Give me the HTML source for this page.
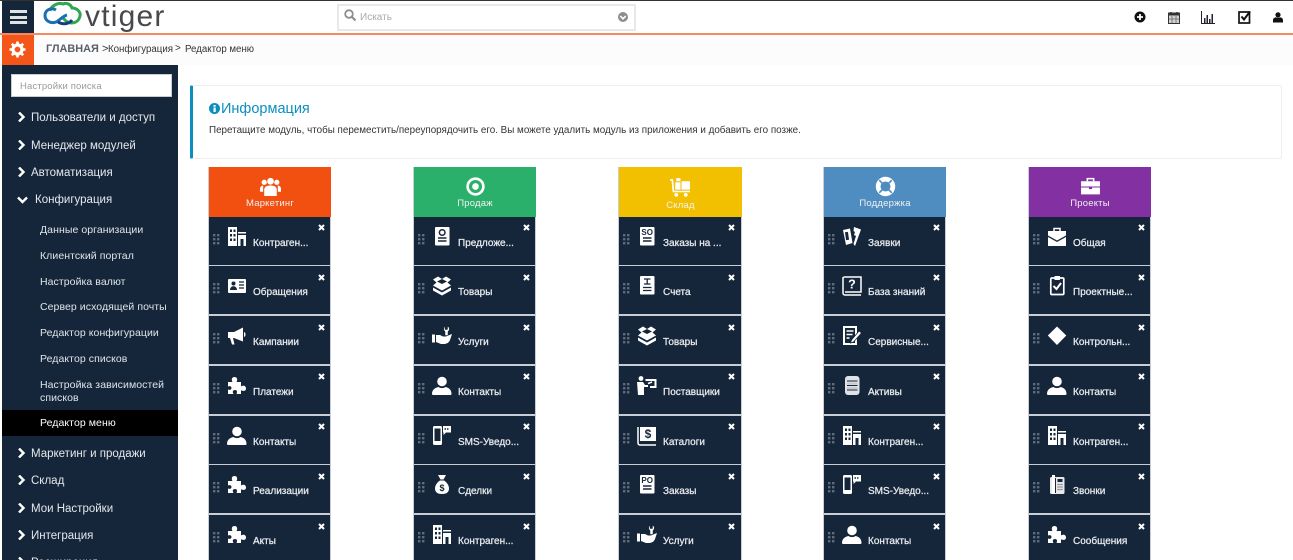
<!DOCTYPE html>
<html><head><meta charset="utf-8"><title>vtiger</title>
<style>
*{box-sizing:border-box}
html,body{margin:0;padding:0;width:1293px;height:560px;overflow:hidden;background:#fff;font-family:"Liberation Sans","DejaVu Sans",sans-serif}
#w{position:relative;width:1293px;height:560px;overflow:hidden;background:#fff}
.a{position:absolute}
.s{position:absolute;left:31px;font-size:11.5px;color:#e4e8ec;white-space:nowrap;line-height:14px}
.c{position:absolute;left:40px;font-size:10.5px;color:#dfe4e9;white-space:nowrap;line-height:13px;letter-spacing:.07px}
.ch{position:absolute;left:17px;width:9px;height:10px}
.col{position:absolute;top:167px;width:122px;height:393px;background:#c9ced6;box-shadow:-1px 0 0 #c9ced6;overflow:hidden}
.h{height:49.5px;text-align:center;color:#f2f2f2;font-size:9.5px;position:relative;letter-spacing:.2px}
.h svg{position:absolute;left:50.5px;top:9px;width:21px;height:21px}
.h span{position:absolute;left:0;right:0;top:30px;line-height:13px}
.i{position:relative;height:48px;margin:0 1px 1.75px 0;background:#16263a;color:#e8ebef;font-size:10px;-webkit-text-stroke:.25px #e8ebef;letter-spacing:0}
.i .g{position:absolute;left:4px;top:17px;width:7px;height:11px}
.i .k{position:absolute;left:18px;top:10px;width:20px;height:20px}
.i b{position:absolute;left:44px;top:20px;line-height:13px;white-space:nowrap;font-weight:normal}
.i .x{position:absolute;left:109px;top:7.5px;width:7px;height:7px}
</style></head>
<body>
<div id="w">
<svg width="0" height="0" style="position:absolute">
<defs>
<symbol id="grip" viewBox="0 0 7 11"><g fill="#5f6b7a"><rect x="0" y="0" width="2.4" height="2.4"/><rect x="4" y="0" width="2.4" height="2.4"/><rect x="0" y="4" width="2.4" height="2.4"/><rect x="4" y="4" width="2.4" height="2.4"/><rect x="0" y="8" width="2.4" height="2.4"/><rect x="4" y="8" width="2.4" height="2.4"/></g></symbol>
<symbol id="x" viewBox="0 0 7 7"><path d="M1 1l5 5M6 1L1 6" stroke="#fff" stroke-width="2" fill="none"/></symbol>
<symbol id="bld" viewBox="0 0 20 20"><path fill="#fff" fill-rule="evenodd" d="M1 0h9v19H1z M3 2.500v2.500h2V2.500z M6.500 2.500v2.500h2V2.500z M3 7v2.500h2V7z M6.500 7v2.500h2V7z M3 11.500v2.500h2v-2.500z M6.500 11.500v2.500h2v-2.500z M11 5h8v1.500h-8z M11 8h8v11h-2.500v-7h-3v7H11z"/></symbol>
<symbol id="card" viewBox="0 0 20 20"><rect x="1" y="3" width="18" height="14" rx="1" fill="#fff"/><circle cx="6.500" cy="7.500" r="2" fill="#16263a"/><path d="M3 14c0-5 7-5 7 0z" fill="#16263a"/><path d="M12 6h5M12 9h5M12 12h5" stroke="#16263a" stroke-width="1.300"/></symbol>
<symbol id="mega" viewBox="0 0 20 20"><path fill="#fff" d="M1 6h6l9-4.500v14L7 12H6l1.500 6.500H5L3 12H1z"/><path fill="#fff" d="M17 6c2 .5 2 4.500 0 5z"/></symbol>
<symbol id="puz" viewBox="0 0 20 20"><path fill="#fff" d="M1 6h4.500C4 3.500 5 1 7.500 1s3.500 2.500 2 5H14v4.500c2.500-1.500 5-.5 5 2s-2.500 3-5 1.800V18H9.500c1-2.500.5-4-1.500-4s-3 1.500-1.500 4H1v-4.500c2 1 3.500 0 3.500-1.500S3 9.500 1 10.500z"/></symbol>
<symbol id="usr" viewBox="0 0 20 20"><circle cx="10" cy="5.500" r="4.800" fill="#fff"/><path fill="#fff" d="M0 18c0-5 4-6.500 6.500-7 2 1.500 5 1.500 7 0 2.500.5 6 2 6 7 0 .5-.5 1-1 1H1c-.5 0-1-.5-1-1z"/></symbol>
<symbol id="quo" viewBox="0 0 20 20"><rect x="3" y="0" width="14.500" height="18.500" rx="1" fill="#fff"/><circle cx="10.200" cy="5.500" r="2.800" fill="none" stroke="#16263a" stroke-width="1.500"/><path d="M6 11h8.500M6 14h8.500" stroke="#16263a" stroke-width="1.400"/></symbol>
<symbol id="box" viewBox="0 0 20 20"><path fill="#fff" d="M1 3.500L6 .5l4 2.500 4-2.500 5 3-3.500 3 3.500 3-9 5-9-5 3.500-3z"/><path fill="#16263a" d="M5 5.500L10 3l5 2.500L10 8z"/><path fill="#fff" d="M1 11.500l9 5 9-5v3l-9 5-9-5z"/></symbol>
<symbol id="svc" viewBox="0 0 20 20"><rect x="0" y="8.500" width="3" height="8" fill="#fff"/><path fill="#fff" d="M4 9h4l3 1.500h3l1-.5 5-2-2 6c-1 3-4 4-6 4H9l-5-2z"/><path fill="#fff" d="M13 .5v3h2.500v-3c2 .5 2.500 3 1 4.500l-.5.500v4h-3v-4c-1.500-1-2-4 0-5z" stroke="#16263a" stroke-width=".5"/></symbol>
<symbol id="sms" viewBox="0 0 20 20"><rect x="1" y="0" width="9" height="19" rx="1.500" fill="#fff"/><rect x="2.500" y="2.500" width="6" height="12.500" fill="#16263a"/><path fill="#fff" d="M11 0h8v6.500h-5L11.500 9V6.500H11z"/><path d="M12.500 3h1.500M15 3h1.500" stroke="#16263a" stroke-width="1.500"/></symbol>
<symbol id="bag" viewBox="0 0 20 20"><path fill="#fff" d="M6 0h8l-2.500 4.500h-3z"/><path fill="#fff" d="M8 5.500h4c3 2 5 5 5 8 0 4-3 5.500-7 5.500s-7-1.500-7-5.500c0-3 2-6 5-8z"/><text x="10" y="16" font-size="9" font-weight="bold" text-anchor="middle" fill="#16263a" font-family="Liberation Sans">$</text></symbol>
<symbol id="so" viewBox="0 0 20 20"><rect x="3" y="0" width="14.500" height="18.500" rx="1" fill="#fff"/><text x="10.200" y="8" font-size="8" font-weight="bold" text-anchor="middle" fill="#16263a" font-family="Liberation Sans">SO</text><path d="M6 11h8.500M6 14h8.500" stroke="#16263a" stroke-width="1.400"/></symbol>
<symbol id="po" viewBox="0 0 20 20"><rect x="3" y="0" width="14.500" height="18.500" rx="1" fill="#fff"/><text x="10.200" y="8" font-size="8" font-weight="bold" text-anchor="middle" fill="#16263a" font-family="Liberation Sans">PO</text><path d="M6 11h8.500M6 14h8.500" stroke="#16263a" stroke-width="1.400"/></symbol>
<symbol id="inv" viewBox="0 0 20 20"><rect x="3" y="0" width="14.500" height="18.500" rx="1" fill="#fff"/><path d="M7 3h6.500M10.200 3v5M7 8h6.500M6 11.500h8.500M6 14.500h8.500" stroke="#16263a" stroke-width="1.300"/></symbol>
<symbol id="vnd" viewBox="0 0 20 20"><circle cx="4" cy="2.500" r="2.400" fill="#fff"/><path fill="#fff" d="M0 6h6l2 3h3v2H7v8H1z"/><path d="M8.500 4h10v7H13" fill="none" stroke="#fff" stroke-width="2"/><path d="M11 7.500l4-1.500" stroke="#fff" stroke-width="1.500"/></symbol>
<symbol id="cat" viewBox="0 0 20 20"><path d="M1 1v16c0 1 .7 2 2 2h16" fill="none" stroke="#fff" stroke-width="1.500"/><path fill="#fff" d="M3 1h16v14H3z"/><text x="11" y="12" font-size="12" font-weight="bold" text-anchor="middle" fill="#16263a" font-family="Liberation Sans">$</text></symbol>
<symbol id="kb" viewBox="0 0 20 20"><path d="M1 1v16c0 1 .7 2 2 2h16" fill="none" stroke="#fff" stroke-width="1.500"/><path fill="none" stroke="#fff" stroke-width="1.500" d="M1.500 1h17.500v15H3"/><text x="10" y="12.500" font-size="12.500" font-weight="bold" text-anchor="middle" fill="#fff" font-family="Liberation Sans">?</text></symbol>
<symbol id="tik" viewBox="0 0 20 20"><path fill="#fff" d="M1 3l7-1.500L10.500 16l-6.500 2z"/><rect x="3.500" y="5" width="3" height="8" fill="#16263a" transform="rotate(-8 5 9)"/><path fill="#fff" d="M12 0l7 2.500-6 16.500-1.500-2L14 9l-2-1 1-3-1.500-1z"/></symbol>
<symbol id="srv" viewBox="0 0 20 20"><path fill="none" stroke="#fff" stroke-width="2" d="M2 1h12v17H2z"/><path d="M4.500 5h7M4.500 8.500h6M4.500 12h3" stroke="#fff" stroke-width="1.500"/><path fill="#fff" d="M17 5l2.500 2-8 9-3 1 1-3z" stroke="#16263a" stroke-width=".8"/></symbol>
<symbol id="ast" viewBox="0 0 20 20"><rect x="3" y="0" width="14.500" height="19" rx="3" fill="#dfe2e6"/><path d="M5 5h10.500M5 9.500h10.500M5 14h10.500" stroke="#16263a" stroke-width="1"/><path d="M5 6.500h10.500v2H5zM5 11h10.500v2H5z" fill="#c7ccd2"/></symbol>
<symbol id="brf" viewBox="0 0 20 20"><path d="M7 4V1.500h6V4" fill="none" stroke="#fff" stroke-width="1.500"/><path fill="#fff" d="M1 4h18v4.500l-9 5-9-5zM1 10l9 5 9-5v9H1z"/></symbol>
<symbol id="clp" viewBox="0 0 20 20"><rect x="3.800" y="2" width="13" height="16.500" rx="1" fill="none" stroke="#fff" stroke-width="1.700"/><rect x="7.500" y="0" width="5.500" height="4" fill="#fff"/><path d="M6.500 10l3 3 4.500-6" fill="none" stroke="#fff" stroke-width="2"/></symbol>
<symbol id="dia" viewBox="0 0 20 20"><path fill="#fff" d="M10 .5l9.300 9-9.300 9.500L.8 9.500z"/></symbol>
<symbol id="phn" viewBox="0 0 20 20"><rect x="3" y="2" width="14.500" height="17" rx="1.500" fill="#e8e8e8"/><rect x="5" y="0" width="3" height="19" fill="#fff"/><rect x="8" y="3" width="1" height="15" fill="#16263a"/><rect x="10.500" y="4" width="5" height="3" fill="#16263a"/><path d="M10.500 9.500h5M10.500 12h5M10.500 14.500h5" stroke="#5f6b7a" stroke-width="1.200" stroke-dasharray="1.200 .7"/></symbol>
</defs>
</svg>

<!-- top bar -->
<div class="a" style="left:0;top:0;width:1293px;height:1px;background:#333"></div>
<div class="a" style="left:0;top:33px;width:1293px;height:2px;background:#f58a62"></div>
<div class="a" style="left:2px;top:1px;width:32px;height:32px;background:#16263a"></div>
<div class="a" style="left:10px;top:10px;width:17px;height:3px;background:#dfe3e6"></div>
<div class="a" style="left:10px;top:15.500px;width:17px;height:3px;background:#dfe3e6"></div>
<div class="a" style="left:10px;top:21px;width:17px;height:3px;background:#dfe3e6"></div>

<!-- logo -->
<svg class="a" style="left:43px;top:2px" width="40" height="24" viewBox="0 0 40 24">
<path d="M7 9C8 4 15 0 20 2 24 0 28 3 29 6 34 6 38 10 37 14 36 19 32 21 28 21 24 21 22 18 19 15" fill="none" stroke="#2fa64f" stroke-width="3"/>
<path d="M13 8C8 5 2 8 2 13.500 2 19 8 22 13 20 17 18 20 14 24 13" fill="none" stroke="#1c6fb3" stroke-width="3"/>
<path d="M15 20C20 23 26 22 29 18" fill="none" stroke="#123f80" stroke-width="3"/>
</svg>
<div class="a" style="left:85px;top:-1px;font-size:30px;line-height:36px;color:#47494c;letter-spacing:1.200px;white-space:nowrap">vtiger</div>

<!-- search -->
<div class="a" style="left:337px;top:4px;width:299px;height:27px;border:2px solid #e8e8e8;background:#fff"></div>
<svg class="a" style="left:344px;top:9px" width="13" height="13" viewBox="0 0 13 13"><circle cx="5" cy="5" r="3.800" fill="none" stroke="#8a8f94" stroke-width="1.800"/><path d="M8 8l3.500 3.500" stroke="#8a8f94" stroke-width="2.200"/></svg>
<div class="a" style="left:360px;top:11px;font-size:10px;line-height:13px;color:#aaa">Искать</div>
<svg class="a" style="left:617px;top:11px" width="12" height="12" viewBox="0 0 12 12"><circle cx="6" cy="6" r="5" fill="#8a8f94"/><path d="M3.300 5L6 7.800 8.700 5" fill="none" stroke="#fff" stroke-width="1.600"/></svg>

<!-- top right icons -->
<svg class="a" style="left:1134px;top:11px" width="12" height="12" viewBox="0 0 12 12"><circle cx="6" cy="6" r="5.500" fill="#111"/><path d="M6 3v6M3 6h6" stroke="#fff" stroke-width="1.800"/></svg>
<svg class="a" style="left:1168px;top:11px" width="12" height="13" viewBox="0 0 12 13"><rect x=".5" y="2" width="11" height="10.500" fill="#d0d3d5" stroke="#333"/><rect x=".5" y="2" width="11" height="2.500" fill="#333"/><path d="M3 1v2M9 1v2" stroke="#333" stroke-width="1.500"/><path d="M4 5v7M8 5v7M1 8h10" stroke="#666" stroke-width=".8"/></svg>
<svg class="a" style="left:1201px;top:11px" width="14" height="13" viewBox="0 0 14 13"><path d="M.5 0v12.500H14" fill="none" stroke="#223" stroke-width="1"/><path d="M3 7h1.500v5H3zM5.500 4h1.500v8H5.500zM8 8h1.500v4H8zM10.500 3H12v9h-1.500z" fill="#223"/></svg>
<svg class="a" style="left:1238px;top:10px" width="13" height="14" viewBox="0 0 13 14"><rect x="1" y="2" width="10.500" height="11" fill="none" stroke="#111" stroke-width="1.700"/><path d="M3.500 6.500l2.500 3L12 1.500" fill="none" stroke="#111" stroke-width="2"/></svg>
<svg class="a" style="left:1273px;top:12px" width="10" height="11" viewBox="0 0 10 11"><circle cx="5" cy="2.800" r="2.600" fill="#111"/><path d="M0 10.500V8c0-2 2-2.500 3-2.800 1 .6 3 .6 4 0C8 5.500 10 6 10 8v2.500z" fill="#111"/></svg>

<!-- breadcrumb -->
<div class="a" style="left:0;top:35px;width:1293px;height:30px;background:#fcfcfc"></div>
<div class="a" style="left:2px;top:35px;width:32px;height:30px;background:#f4561a"></div>
<svg class="a" style="left:9px;top:41px" width="17" height="17" viewBox="0 0 17 17"><circle cx="8.500" cy="8.500" r="4.500" fill="none" stroke="#fff" stroke-width="3.200"/><path d="M8.500 .5v3M8.500 13.500v3M.5 8.500h3M13.500 8.500h3M2.800 2.800l2.200 2.200M12 12l2.200 2.200M14.200 2.800L12 5M5 12l-2.200 2.200" stroke="#fff" stroke-width="2.600"/></svg>
<div class="a" style="left:46px;top:42px;font-size:10.900px;line-height:15px;font-weight:bold;color:#5a6068;white-space:nowrap">ГЛАВНАЯ</div>
<div class="a" style="left:102px;top:42px;font-size:11px;line-height:15px;color:#333">&gt;</div>
<div class="a" style="left:108px;top:43px;font-size:9.700px;line-height:14px;color:#333;white-space:nowrap">Конфигурация</div>
<div class="a" style="left:175px;top:42px;font-size:10px;line-height:14px;color:#333">&gt;</div>
<div class="a" style="left:185px;top:43px;font-size:9.700px;line-height:14px;color:#333;white-space:nowrap">Редактор меню</div>

<!-- sidebar -->
<div class="a" style="left:2px;top:65px;width:176px;height:495px;background:#16263a"></div>
<div class="a" style="left:11px;top:74px;width:161px;height:23px;background:#fff;border:1px solid #c8ccd0"></div>
<div class="a" style="left:20px;top:81px;font-size:9.500px;line-height:12px;color:#9a9a9a;letter-spacing:.15px">Настройки поиска</div>

<svg class="ch" style="top:112px" viewBox="0 0 9 10"><path d="M2 .5L6.500 5 2 9.500" fill="none" stroke="#fff" stroke-width="2.400"/></svg>
<div class="s" style="top:111px">Пользователи и доступ</div>
<svg class="ch" style="top:140px" viewBox="0 0 9 10"><path d="M2 .5L6.500 5 2 9.500" fill="none" stroke="#fff" stroke-width="2.400"/></svg>
<div class="s" style="top:139px">Менеджер модулей</div>
<svg class="ch" style="top:167px" viewBox="0 0 9 10"><path d="M2 .5L6.500 5 2 9.500" fill="none" stroke="#fff" stroke-width="2.400"/></svg>
<div class="s" style="top:166px">Автоматизация</div>
<svg class="ch" style="top:195px;width:11px" viewBox="0 0 11 10"><path d="M1 2.500L5.500 7 10 2.500" fill="none" stroke="#fff" stroke-width="2.400"/></svg>
<div class="s" style="top:193px;left:35px">Конфигурация</div>
<div class="c" style="top:224px">Данные организации</div>
<div class="c" style="top:250px">Клиентский портал</div>
<div class="c" style="top:276px">Настройка валют</div>
<div class="c" style="top:301px">Сервер исходящей почты</div>
<div class="c" style="top:327px">Редактор конфигурации</div>
<div class="c" style="top:353px">Редактор списков</div>
<div class="c" style="top:379px">Настройка зависимостей</div>
<div class="c" style="top:392px">списков</div>
<div class="a" style="left:2px;top:410px;width:176px;height:26px;background:#000"></div>
<div class="c" style="top:417px;color:#fff">Редактор меню</div>
<svg class="ch" style="top:448px" viewBox="0 0 9 10"><path d="M2 .5L6.500 5 2 9.500" fill="none" stroke="#fff" stroke-width="2.400"/></svg>
<div class="s" style="top:447px">Маркетинг и продажи</div>
<svg class="ch" style="top:475px" viewBox="0 0 9 10"><path d="M2 .5L6.500 5 2 9.500" fill="none" stroke="#fff" stroke-width="2.400"/></svg>
<div class="s" style="top:474px">Склад</div>
<svg class="ch" style="top:503px" viewBox="0 0 9 10"><path d="M2 .5L6.500 5 2 9.500" fill="none" stroke="#fff" stroke-width="2.400"/></svg>
<div class="s" style="top:502px">Мои Настройки</div>
<svg class="ch" style="top:530px" viewBox="0 0 9 10"><path d="M2 .5L6.500 5 2 9.500" fill="none" stroke="#fff" stroke-width="2.400"/></svg>
<div class="s" style="top:529px">Интеграция</div>
<svg class="ch" style="top:557px" viewBox="0 0 9 10"><path d="M2 .5L6.500 5 2 9.500" fill="none" stroke="#fff" stroke-width="2.400"/></svg>
<div class="s" style="top:556px">Расширения</div>

<!-- info -->
<div class="a" style="left:190px;top:85px;width:1092px;height:74px;background:#fff;border:1px solid #eee;border-left:3px solid #0b8fbe;border-radius:2px"></div>
<svg class="a" style="left:209px;top:103px" width="11" height="11" viewBox="0 0 11 11"><circle cx="5.500" cy="5.500" r="5.500" fill="#0b8fbe"/><rect x="4.500" y="4.500" width="2.200" height="4.500" fill="#fff"/><rect x="4.500" y="2" width="2.200" height="1.700" fill="#fff"/></svg>
<div class="a" style="left:221px;top:100px;font-size:14.500px;line-height:18px;color:#0b8fbe;white-space:nowrap">Информация</div>
<div class="a" style="left:209px;top:124px;font-size:9.850px;line-height:13px;color:#333;white-space:nowrap">Перетащите модуль, чтобы переместить/переупорядочить его. Вы можете удалить модуль из приложения и добавить его позже.</div>

<!-- col 1 -->
<div class="col" style="left:209px">
<div class="h" style="background:#f15011"><svg viewBox="0 0 20 20"><g fill="#fff"><circle cx="10" cy="5" r="3.200"/><circle cx="4" cy="6" r="2.500"/><circle cx="16" cy="6" r="2.500"/><path d="M4 19v-6c0-3 3-4 6-4s6 1 6 4v6z"/><path d="M0 15v-3c0-2 2-3 3-3v6zM20 15v-3c0-2-2-3-3-3v6z"/></g></svg><span>Маркетинг</span></div>
<div class="i"><svg class="g"><use href="#grip"/></svg><svg class="k"><use href="#bld"/></svg><b>Контраген...</b><svg class="x"><use href="#x"/></svg></div>
<div class="i"><svg class="g"><use href="#grip"/></svg><svg class="k"><use href="#card"/></svg><b>Обращения</b><svg class="x"><use href="#x"/></svg></div>
<div class="i"><svg class="g"><use href="#grip"/></svg><svg class="k"><use href="#mega"/></svg><b>Кампании</b><svg class="x"><use href="#x"/></svg></div>
<div class="i"><svg class="g"><use href="#grip"/></svg><svg class="k"><use href="#puz"/></svg><b>Платежи</b><svg class="x"><use href="#x"/></svg></div>
<div class="i"><svg class="g"><use href="#grip"/></svg><svg class="k"><use href="#usr"/></svg><b>Контакты</b><svg class="x"><use href="#x"/></svg></div>
<div class="i"><svg class="g"><use href="#grip"/></svg><svg class="k"><use href="#puz"/></svg><b>Реализации</b><svg class="x"><use href="#x"/></svg></div>
<div class="i"><svg class="g"><use href="#grip"/></svg><svg class="k"><use href="#puz"/></svg><b>Акты</b><svg class="x"><use href="#x"/></svg></div>
</div>

<!-- col 2 -->
<div class="col" style="left:414px">
<div class="h" style="background:#2bb06b"><svg viewBox="0 0 20 20"><circle cx="10" cy="10" r="7.500" fill="none" stroke="#fff" stroke-width="2.500"/><circle cx="10" cy="10" r="3.200" fill="#fff"/></svg><span>Продаж</span></div>
<div class="i"><svg class="g"><use href="#grip"/></svg><svg class="k"><use href="#quo"/></svg><b>Предложе...</b><svg class="x"><use href="#x"/></svg></div>
<div class="i"><svg class="g"><use href="#grip"/></svg><svg class="k"><use href="#box"/></svg><b>Товары</b><svg class="x"><use href="#x"/></svg></div>
<div class="i"><svg class="g"><use href="#grip"/></svg><svg class="k"><use href="#svc"/></svg><b>Услуги</b><svg class="x"><use href="#x"/></svg></div>
<div class="i"><svg class="g"><use href="#grip"/></svg><svg class="k"><use href="#usr"/></svg><b>Контакты</b><svg class="x"><use href="#x"/></svg></div>
<div class="i"><svg class="g"><use href="#grip"/></svg><svg class="k"><use href="#sms"/></svg><b>SMS-Уведо...</b><svg class="x"><use href="#x"/></svg></div>
<div class="i"><svg class="g"><use href="#grip"/></svg><svg class="k"><use href="#bag"/></svg><b>Сделки</b><svg class="x"><use href="#x"/></svg></div>
<div class="i"><svg class="g"><use href="#grip"/></svg><svg class="k"><use href="#bld"/></svg><b>Контраген...</b><svg class="x"><use href="#x"/></svg></div>
</div>

<!-- col 3 -->
<div class="col" style="left:619px;width:123px">
<div class="h" style="background:#f2c000"><svg viewBox="0 0 20 20"><g fill="#fff"><path d="M0 3h3l1 11h15v1.500H2.500L1.500 4.500H0z"/><rect x="6" y="2" width="4" height="3"/><rect x="5" y="6" width="5" height="7"/><rect x="11" y="5" width="8" height="8"/><circle cx="6" cy="18" r="1.800"/><circle cx="15" cy="18" r="1.800"/></g></svg><span style="top:32px">Склад</span></div>
<div class="i"><svg class="g"><use href="#grip"/></svg><svg class="k"><use href="#so"/></svg><b>Заказы на ...</b><svg class="x"><use href="#x"/></svg></div>
<div class="i"><svg class="g"><use href="#grip"/></svg><svg class="k"><use href="#inv"/></svg><b>Счета</b><svg class="x"><use href="#x"/></svg></div>
<div class="i"><svg class="g"><use href="#grip"/></svg><svg class="k"><use href="#box"/></svg><b>Товары</b><svg class="x"><use href="#x"/></svg></div>
<div class="i"><svg class="g"><use href="#grip"/></svg><svg class="k"><use href="#vnd"/></svg><b>Поставщики</b><svg class="x"><use href="#x"/></svg></div>
<div class="i"><svg class="g"><use href="#grip"/></svg><svg class="k"><use href="#cat"/></svg><b>Каталоги</b><svg class="x"><use href="#x"/></svg></div>
<div class="i"><svg class="g"><use href="#grip"/></svg><svg class="k"><use href="#po"/></svg><b>Заказы</b><svg class="x"><use href="#x"/></svg></div>
<div class="i"><svg class="g"><use href="#grip"/></svg><svg class="k"><use href="#svc"/></svg><b>Услуги</b><svg class="x"><use href="#x"/></svg></div>
</div>

<!-- col 4 -->
<div class="col" style="left:824px">
<div class="h" style="background:#4f8dc0"><svg viewBox="0 0 20 20"><circle cx="10" cy="10" r="7" fill="none" stroke="#fff" stroke-width="4.500"/><path d="M4 4l3.500 3.500M16 4l-3.500 3.500M4 16l3.500-3.500M16 16l-3.500-3.500" stroke="#4f8dc0" stroke-width="1.600"/></svg><span>Поддержка</span></div>
<div class="i"><svg class="g"><use href="#grip"/></svg><svg class="k"><use href="#tik"/></svg><b>Заявки</b><svg class="x"><use href="#x"/></svg></div>
<div class="i"><svg class="g"><use href="#grip"/></svg><svg class="k"><use href="#kb"/></svg><b>База знаний</b><svg class="x"><use href="#x"/></svg></div>
<div class="i"><svg class="g"><use href="#grip"/></svg><svg class="k"><use href="#srv"/></svg><b>Сервисные...</b><svg class="x"><use href="#x"/></svg></div>
<div class="i"><svg class="g"><use href="#grip"/></svg><svg class="k"><use href="#ast"/></svg><b>Активы</b><svg class="x"><use href="#x"/></svg></div>
<div class="i"><svg class="g"><use href="#grip"/></svg><svg class="k"><use href="#bld"/></svg><b>Контраген...</b><svg class="x"><use href="#x"/></svg></div>
<div class="i"><svg class="g"><use href="#grip"/></svg><svg class="k"><use href="#sms"/></svg><b>SMS-Уведо...</b><svg class="x"><use href="#x"/></svg></div>
<div class="i"><svg class="g"><use href="#grip"/></svg><svg class="k"><use href="#usr"/></svg><b>Контакты</b><svg class="x"><use href="#x"/></svg></div>
</div>

<!-- col 5 -->
<div class="col" style="left:1029px">
<div class="h" style="background:#8230a2"><svg viewBox="0 0 20 20"><path d="M7 5V2.500h6V5" fill="none" stroke="#fff" stroke-width="1.500"/><path fill="#fff" d="M1 5h18v5H1zM1 11h7.500v1.500h3V11H19v6.500H1z"/></svg><span>Проекты</span></div>
<div class="i"><svg class="g"><use href="#grip"/></svg><svg class="k"><use href="#brf"/></svg><b>Общая</b><svg class="x"><use href="#x"/></svg></div>
<div class="i"><svg class="g"><use href="#grip"/></svg><svg class="k"><use href="#clp"/></svg><b>Проектные...</b><svg class="x"><use href="#x"/></svg></div>
<div class="i"><svg class="g"><use href="#grip"/></svg><svg class="k"><use href="#dia"/></svg><b>Контрольн...</b><svg class="x"><use href="#x"/></svg></div>
<div class="i"><svg class="g"><use href="#grip"/></svg><svg class="k"><use href="#usr"/></svg><b>Контакты</b><svg class="x"><use href="#x"/></svg></div>
<div class="i"><svg class="g"><use href="#grip"/></svg><svg class="k"><use href="#bld"/></svg><b>Контраген...</b><svg class="x"><use href="#x"/></svg></div>
<div class="i"><svg class="g"><use href="#grip"/></svg><svg class="k"><use href="#phn"/></svg><b>Звонки</b><svg class="x"><use href="#x"/></svg></div>
<div class="i"><svg class="g"><use href="#grip"/></svg><svg class="k"><use href="#puz"/></svg><b>Сообщения</b><svg class="x"><use href="#x"/></svg></div>
</div>
</div>
</body></html>
